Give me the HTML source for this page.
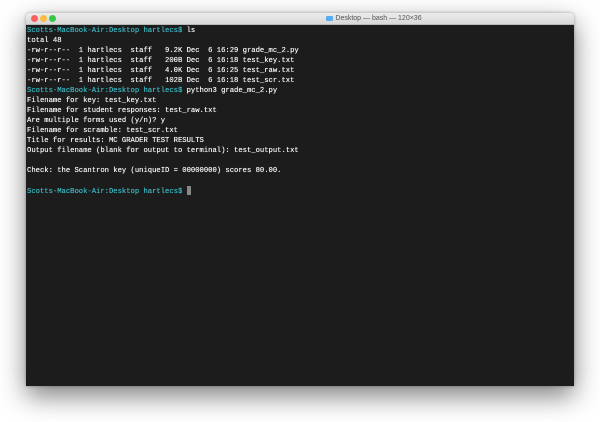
<!DOCTYPE html>
<html><head><style>
body{margin:0;width:600px;height:422px;background:#fff;overflow:hidden;position:relative;font-family:"Liberation Sans",sans-serif}
.win{position:absolute;left:26px;top:13px;width:548px;height:373px;border-radius:4px 4px 0 0;box-shadow:0 10px 26px rgba(0,0,0,.5),0 0 3px rgba(0,0,0,.3);overflow:hidden}
.tb{height:11px;background:linear-gradient(#ececec,#d8d8d8);position:relative;border-bottom:1px solid #b9b9b9}
.d{position:absolute;top:2px;width:7px;height:7px;border-radius:50%}
.title{position:absolute;left:0;right:0;top:0;text-align:center;font-size:7px;line-height:11px;color:#555;padding-left:148px}
.fold{display:inline-block;width:7px;height:5px;background:#5aaef0;vertical-align:-0.5px;margin-right:2px;border-radius:1px}
.term{position:absolute;top:12px;left:0;right:0;bottom:0;background:#1c1c1c}
pre{margin:0;position:absolute;left:1px;top:1px;font-family:"Liberation Mono",monospace;font-size:7.2px;line-height:10px;color:#f4f4f4;font-weight:normal;text-shadow:0 0 0.4px #fff}
.p{color:#3ab8c2;text-shadow:0 0 0.4px #3ab8c2}
.cur{display:inline-block;width:4px;height:9px;background:#888;vertical-align:-2px}
</style></head><body>
<div class="win">
<div class="tb">
<div class="d" style="left:5px;background:#fc605c"></div>
<div class="d" style="left:14px;background:#fdbc40"></div>
<div class="d" style="left:23px;background:#34c84a"></div>
<div class="title"><span class="fold"></span>Desktop — bash — 120×36</div>
</div>
<div class="term"><pre><span class="p">Scotts-MacBook-Air:Desktop hartlecs$</span> ls
total 48
-rw-r--r--  1 hartlecs  staff   9.2K Dec  6 16:29 grade_mc_2.py
-rw-r--r--  1 hartlecs  staff   200B Dec  6 16:18 test_key.txt
-rw-r--r--  1 hartlecs  staff   4.0K Dec  6 16:25 test_raw.txt
-rw-r--r--  1 hartlecs  staff   102B Dec  6 16:18 test_scr.txt
<span class="p">Scotts-MacBook-Air:Desktop hartlecs$</span> python3 grade_mc_2.py
Filename for key: test_key.txt
Filename for student responses: test_raw.txt
Are multiple forms used (y/n)? y
Filename for scramble: test_scr.txt
Title for results: MC GRADER TEST RESULTS
Output filename (blank for output to terminal): test_output.txt

Check: the Scantron key (uniqueID = 00000000) scores 80.00.

<span class="p">Scotts-MacBook-Air:Desktop hartlecs$</span> <span class="cur"></span></pre></div>
</div>
</body></html>
